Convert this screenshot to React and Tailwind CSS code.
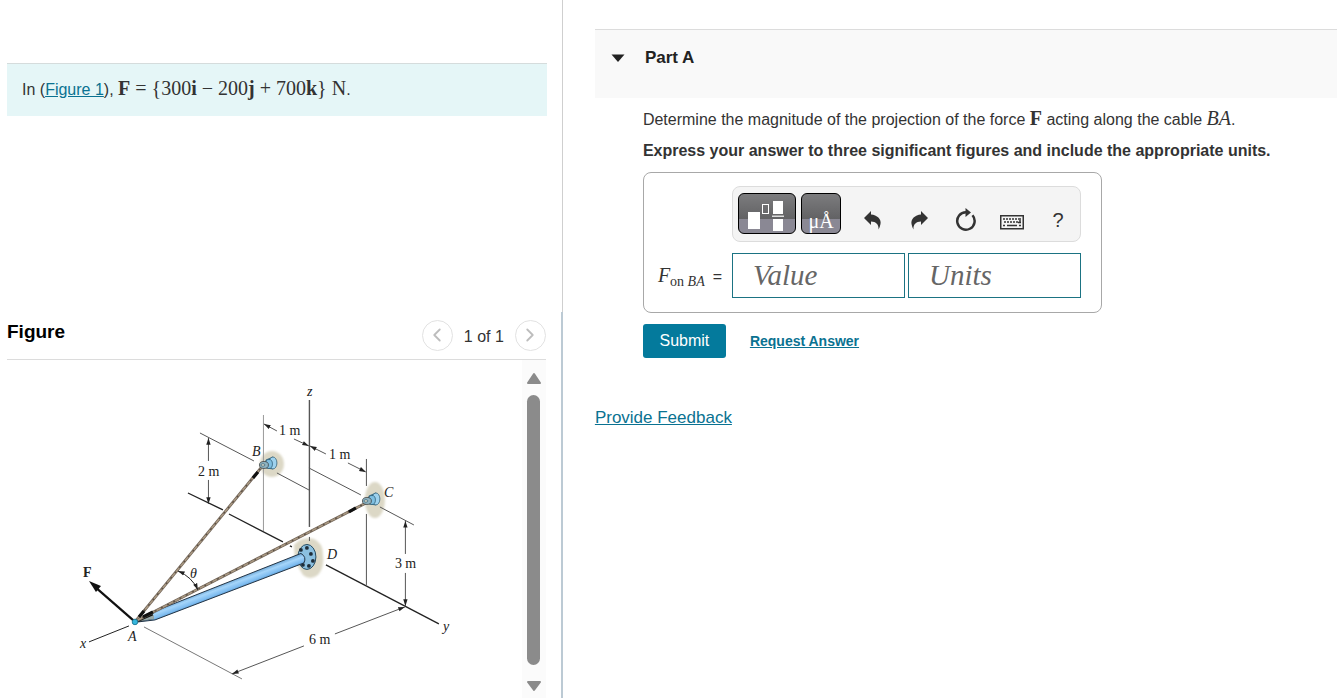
import React, { useState } from 'react';
import { ChevronLeft, ChevronRight } from 'lucide-react';

function Introduction() {
  return (
    <div className="border-t border-[#d5dcdc] bg-[#e5f6f7] px-[15px] h-[53px] flex items-center text-base text-[#333]">
      <p className="leading-6">
        In (
        <a href="#figure" className="text-[#0a7291] underline">
          Figure 1
        </a>
        ),{' '}
        <span className="inline-flex gap-[5px] font-['Liberation_Serif',serif] text-xl leading-5">
          <b>F</b>
          <span>=</span>
          <span>
            {'{'}300<b>i</b>
          </span>
          <span>−</span>
          <span>
            200<b>j</b>
          </span>
          <span>+</span>
          <span>
            700<b>k</b>
            {'}'}
          </span>
          <span>N</span>
        </span>
        .
      </p>
    </div>
  );
}

function Label({ x, y, italic, bold, children }) {
  return (
    <text
      x={x}
      y={y}
      fontSize="14"
      fill="#222"
      stroke="none"
      fontFamily="'Liberation Serif', serif"
      fontStyle={italic ? 'italic' : 'normal'}
      fontWeight={bold ? 'bold' : 'normal'}
    >
      {children}
    </text>
  );
}

// small ring that anchors a cable to the wall
function Anchor({ x, y }) {
  return (
    <g stroke="#24536b" strokeWidth="0.7">
      <path d={`M${x - 2} ${y - 4} l7 -3 v12 l-7 -1 z`} fill="#5fa9cf" />
      <ellipse cx={x + 5} cy={y - 1} rx="4" ry="6" fill="#9ed2ee" />
      <ellipse cx={x + 1} cy={y} rx="3.500" ry="4.5" fill="#7fc0e2" />
      <ellipse cx={x - 4} cy={y + 1} rx="4.500" ry="3.500" fill="#8fb4c2" stroke="#333" />
      <ellipse cx={x - 5} cy={y + 1} rx="2" ry="1.200" fill="#e8e2cf" />
    </g>
  );
}

function Cable({ x1, y1, x2, y2 }) {
  return (
    <g>
      <line x1={x1} y1={y1} x2={x2} y2={y2} stroke="#6b5f53" strokeWidth="2.8" />
      <line x1={x1} y1={y1} x2={x2} y2={y2} stroke="#a89781" strokeWidth="1.6" />
      <line x1={x1} y1={y1} x2={x2} y2={y2} stroke="#5d5146" strokeWidth="1.4" strokeDasharray="2 5" />
    </g>
  );
}

const bolts = [
  [301, 550],
  [307, 548],
  [311, 554],
  [313, 561],
  [309, 566],
  [303, 565],
];

function Diagram() {
  return (
    <svg viewBox="7 360 515 338" className="min-w-0 flex-1 self-start" role="img" aria-label="Figure 1">
      <defs>
        <marker id="tip" viewBox="0 0 8 6" refX="8" refY="3" markerWidth="7" markerHeight="5" markerUnits="userSpaceOnUse" orient="auto-start-reverse">
          <path d="M0 0.4 L8 3 L0 5.6 z" fill="#222" />
        </marker>
        <linearGradient id="pole" gradientUnits="userSpaceOnUse" x1="222" y1="582" x2="227" y2="595">
          <stop offset="0" stopColor="#4f8fc4" />
          <stop offset="0.4" stopColor="#a5d5fa" />
          <stop offset="0.7" stopColor="#7ebcf0" />
          <stop offset="1" stopColor="#3f7fb5" />
        </linearGradient>
        <filter id="soft" x="-30%" y="-30%" width="160%" height="160%">
          <feGaussianBlur stdDeviation="1.3" />
        </filter>
      </defs>

      <g fill="#dcd8c6" filter="url(#soft)">
        <ellipse cx="272" cy="464" rx="12" ry="13" />
        <ellipse cx="375" cy="500" rx="10" ry="18" />
        <path d="M294 545 q8 -9 20 -6 q9 4 9 15 q2 13 -5 21 q-8 6 -15 0 l-8 -14 z" />
      </g>

      <g stroke="#555" strokeWidth="1" fill="none">
        <path d="M263.500 415 V531" stroke="#999" />
        <path d="M200 433 L254 461 M277 473 L309 490" />
        <path d="M309 468 L361 495 M380 507 L414 525" />
        <path d="M366.500 459 V486 M366.500 514 V585" />
        <path d="M309.500 400 V527" strokeWidth="1.4" />
        <path d="M309.500 537 V541" />
        <path d="M188 493 L223 510 M229 514 L283 542 M290 546 L292 547" stroke="#222" strokeWidth="1.3" />
        <path d="M326 565 L439 624" stroke="#222" strokeWidth="1.3" />
        <path d="M89 642 L129 626" stroke="#222" />
        <path d="M144 627 L242 679" stroke="#777" />
      </g>

      <g stroke="#555" strokeWidth="1" fill="none">
        <path d="M208.500 461 V438" markerEnd="url(#tip)" />
        <path d="M208.500 480 V504" markerEnd="url(#tip)" />
        <path d="M277 431 L264 424" markerEnd="url(#tip)" />
        <path d="M294 439 L309 446" markerEnd="url(#tip)" />
        <path d="M326 454 L310 446" markerEnd="url(#tip)" />
        <path d="M348 463 L366 472" markerEnd="url(#tip)" />
        <path d="M405.500 554 V521" markerEnd="url(#tip)" />
        <path d="M405.500 573 V606" markerEnd="url(#tip)" />
        <path d="M335 634 L405 607" markerEnd="url(#tip)" />
        <path d="M304 646 L232 674" markerEnd="url(#tip)" />
      </g>

      <ellipse cx="307" cy="557" rx="9" ry="12.500" fill="#8bc0e0" stroke="#244a60" />
      {bolts.map(([cx, cy]) => (
        <circle key={`${cx}-${cy}`} cx={cx} cy={cy} r="1.9" fill="#1f2d38" />
      ))}
      <path d="M153 612 L301 553.500 Q307 557 304 563 L155 620 L138 622 z" fill="url(#pole)" stroke="#234" strokeWidth="1" />
      <path d="M136 622 L152 611 L154 619 z" fill="#111" />
      <path d="M140 621 L154 615 L154 619 z" fill="#9aa" />

      <Cable x1={135} y1={622} x2={261} y2={468} />
      <Cable x1={136} y1={621} x2={368} y2={502} />
      <g stroke="#111" strokeWidth="3.200">
        <path d="M253 478 L258 472" />
        <path d="M349 512 L356 508" />
        <path d="M139 617 L144 611" />
        <path d="M143 617 L153 612" />
      </g>

      <Anchor x={268} y={464} />
      <Anchor x={371} y={500} />

      <path d="M178 571 Q192 577 198 590" fill="none" stroke="#222" strokeWidth="1" markerStart="url(#tip)" markerEnd="url(#tip)" />

      <path d="M134 621 L95 587" stroke="#111" strokeWidth="2.200" />
      <path d="M89 581 L101 586 L96 592 z" fill="#111" />
      <circle cx="135" cy="622" r="2.800" fill="#35b6dc" stroke="#156d8c" strokeWidth="0.800" />

      <Label x={307} y={396} italic>z</Label>
      <Label x={279} y={435}>1 m</Label>
      <Label x={329} y={459}>1 m</Label>
      <Label x={252} y={456} italic>B</Label>
      <Label x={198} y={476}>2 m</Label>
      <Label x={384} y={497} italic>C</Label>
      <Label x={327} y={559} italic>D</Label>
      <Label x={395} y={568}>3 m</Label>
      <Label x={190} y={578} italic>θ</Label>
      <Label x={83} y={577} bold>F</Label>
      <Label x={128} y={641} italic>A</Label>
      <Label x={80} y={648} italic>x</Label>
      <Label x={309} y={644}>6 m</Label>
      <Label x={443} y={631} italic>y</Label>
    </svg>
  );
}

function Scrollbar() {
  return (
    <div className="flex w-6 shrink-0 flex-col items-center bg-[#fbfbfb] pb-[6px] pt-3">
      <svg width="16" height="13" viewBox="0 0 16 13">
        <path d="M8 2 L14 11 H2 z" fill="#8b8b8b" stroke="#8b8b8b" strokeWidth="2" strokeLinejoin="round" />
      </svg>
      <div className="mb-[14px] mt-[10px] w-[13px] flex-1 rounded-full bg-[#8b8b8b]" />
      <svg width="16" height="13" viewBox="0 0 16 13">
        <path d="M2 3 H14 L8 11 z" fill="#8b8b8b" stroke="#8b8b8b" strokeWidth="2" strokeLinejoin="round" />
      </svg>
    </div>
  );
}

const pagerButton =
  'flex size-[31px] items-center justify-center rounded-full border border-[#e2e2e2] text-[#bdbdbd]';

function FigurePanel() {
  return (
    <section id="figure" className="flex flex-1 flex-col border-r-2 border-[#bccad4] pl-[7px] pr-[15px]">
      <div className="flex h-12 items-center justify-between border-b border-[#dcdcdc]">
        <h2 className="pb-2 text-[19px] font-bold leading-6 text-black">Figure</h2>
        <div className="flex items-center gap-[11px] pb-px text-base text-[#333]">
          <button type="button" aria-label="Previous figure" className={pagerButton}>
            <ChevronLeft size={22} />
          </button>
          <span className="pt-[3px]">1 of 1</span>
          <button type="button" aria-label="Next figure" className={pagerButton}>
            <ChevronRight size={22} />
          </button>
        </div>
      </div>
      <div className="flex flex-1">
        <Diagram />
        <Scrollbar />
      </div>
    </section>
  );
}

const iconButton = 'flex h-8 w-8 items-center justify-center text-[#333]';

function Toolbar() {
  return (
    <div className="flex h-14 items-start rounded-lg border border-[#dcdcdc] bg-[#f4f4f4] py-[6px] pl-[5px] pr-[6px]">
      <button type="button" aria-label="Templates" className="h-[41px] w-[58px] rounded-md border border-black bg-linear-to-b from-[#7c7c7e] from-0% via-[#626264] via-64% to-[#8a8894] to-64%">
        <svg width="56" height="39" viewBox="0 0 56 39" fill="#fff">
          <rect x="9" y="18" width="12" height="17" />
          <rect x="23.500" y="10.500" width="6" height="9" fill="none" stroke="#fff" />
          <rect x="34" y="7" width="10" height="13" />
          <rect x="33" y="21.500" width="12" height="1.500" fill="#ddd" />
          <rect x="34" y="25" width="10" height="12" />
        </svg>
      </button>
      <button type="button" aria-label="Symbols" className="ml-[5px] flex h-[41px] w-10 items-end justify-center rounded-md border border-black bg-linear-to-b from-[#7c7c7e] from-0% via-[#626264] via-64% to-[#8a8894] to-64% font-['Liberation_Serif',serif] text-xl leading-6 text-white">
        μÅ
      </button>
      <div className="flex flex-1 items-center justify-between pl-4 pt-[11px]">
        <button type="button" aria-label="Undo" className={iconButton}>
          <svg width="18" height="20" viewBox="0 0 18 20" fill="currentColor">
            <path d="M0 8 L7 1 V4.500 C13 5 17.500 9 16.500 14 Q16 17 14.500 19.500 C15 14.500 12 11.500 7 11.500 V15 z" />
          </svg>
        </button>
        <button type="button" aria-label="Redo" className={iconButton}>
          <svg width="18" height="20" viewBox="0 0 18 20" fill="currentColor">
            <path d="M18 8 L11 1 V4.500 C5 5 0.500 9 1.500 14 Q2 17 3.500 19.500 C3 14.500 6 11.500 11 11.500 V15 z" />
          </svg>
        </button>
        <button type="button" aria-label="Reset" className={iconButton}>
          <svg width="22" height="24" viewBox="0 0 22 24">
            <path d="M11 4.300 A8.700 8.700 0 1 0 17.500 7.300" fill="none" stroke="currentColor" strokeWidth="2.500" />
            <path d="M10.500 0 L16 4.500 L10.500 9 z" fill="currentColor" />
          </svg>
        </button>
        <button type="button" aria-label="Keyboard shortcuts" className={iconButton}>
          <svg width="24" height="20" viewBox="0 0 24 20" fill="none" stroke="currentColor">
            <rect x="0.750" y="5.750" width="22.500" height="13" strokeWidth="1.500" />
            <path d="M3 9 H19" strokeWidth="1.500" strokeDasharray="2 1" />
            <path d="M4 12 H18" strokeWidth="1.500" strokeDasharray="2 1" />
            <path d="M3 15.500 H5 M7 15.500 H17 M19 15.500 H21 M20 8 V13 M18 12.500 H21" strokeWidth="1.500" />
          </svg>
        </button>
        <button type="button" aria-label="Help" className={`${iconButton} text-xl`}>
          ?
        </button>
      </div>
    </div>
  );
}

const field =
  "h-[45px] w-[173px] border border-[#1b7383] bg-white pl-5 font-['Liberation_Serif',serif] text-[29px] italic text-[#333] placeholder:text-[#666] placeholder:opacity-100";

function AnswerBox() {
  const [value, setValue] = useState('');
  const [units, setUnits] = useState('');

  return (
    <div className="flex w-fit items-end gap-[10px] rounded-lg border border-[#a8a8a8] pb-[14px] pl-[14px] pr-5 pt-[13px]">
      <label htmlFor="value" className="flex h-[45px] items-baseline pt-2 font-['Liberation_Serif',serif] text-[#333]">
        <i className="text-xl">F</i>
        <sub className="text-sm">
          on <i>BA</i>
        </sub>
        <span className="pl-2 font-['Liberation_Sans',sans-serif] text-base">=</span>
      </label>
      <div className="flex flex-col gap-[11px]">
        <Toolbar />
        <div className="flex gap-[3px]">
          <input id="value" type="text" placeholder="Value" className={field} value={value} onChange={(e) => setValue(e.target.value)} />
          <input type="text" aria-label="Units" placeholder="Units" className={field} value={units} onChange={(e) => setUnits(e.target.value)} />
        </div>
      </div>
    </div>
  );
}

function PartA() {
  const [open, setOpen] = useState(true);

  return (
    <section>
      <div className="h-[69px] border-t border-[#dcdcdc] bg-[#f9f9f9] pl-4 pt-4">
        <button type="button" aria-expanded={open} onClick={() => setOpen(!open)} className="flex items-center gap-5 text-[17px] font-bold leading-6 text-[#222]">
          <svg width="14" height="8" viewBox="0 0 14 8" fill="currentColor">
            <path d="M0.500 0.500 H13.500 L7 8 z" />
          </svg>
          Part A
        </button>
      </div>
      {open && (
        <div className="pl-12 text-base text-[#333]">
          <p className="pt-[10px] leading-6">
            Determine the magnitude of the projection of the force{' '}
            <b className="font-['Liberation_Serif',serif] text-xl leading-5">F</b> acting along the cable{' '}
            <i className="font-['Liberation_Serif',serif] text-xl leading-5">BA</i>.
          </p>
          <p className="mb-[9px] mt-[7px] font-bold leading-6">
            Express your answer to three significant figures and include the appropriate units.
          </p>
          <AnswerBox />
          <div className="mt-[11px] flex items-center gap-6">
            <button type="button" className="h-[34px] w-[83px] rounded-[3px] bg-[#047a9c] text-base text-white">
              Submit
            </button>
            <a href="#answer" className="text-sm font-bold text-[#0a7291] underline">
              Request Answer
            </a>
          </div>
        </div>
      )}
    </section>
  );
}

export default function App() {
  return (
    <div className="flex min-h-screen bg-white font-['Liberation_Sans',Arial,sans-serif]">
      <div className="flex w-[42.1%] shrink-0 flex-col">
        <div className="h-[312px] border-r border-[#cfcfcf] pl-[7px] pr-[15px] pt-[63px]">
          <Introduction />
        </div>
        <FigurePanel />
      </div>
      <main className="min-w-0 flex-1 pl-8 pt-[29px]">
        <PartA />
        <a href="#feedback" className="mt-12 inline-block text-[17px] leading-6 text-[#0a7291] underline">
          Provide Feedback
        </a>
      </main>
    </div>
  );
}
